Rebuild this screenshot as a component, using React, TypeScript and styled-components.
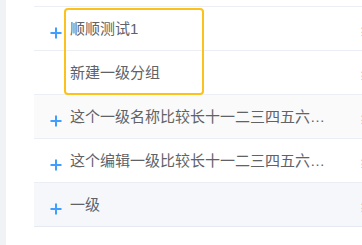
import React from "react";
import styled, { createGlobalStyle } from "styled-components";

const Global = createGlobalStyle`
  html, body { margin: 0; padding: 0; background: #fff; }
  body { width: 362px; height: 245px; overflow: hidden; }
`;

const Page = styled.div`
  display: flex;
  width: 362px;
  height: 245px;
  overflow: hidden;
  font-family: "Liberation Sans", "Noto Sans CJK SC", sans-serif;
`;

const SideStrip = styled.div`
  width: 6px;
  flex: none;
  background: #f0f2f5;
`;

const Main = styled.div`
  flex: none;
  padding: 6px 0 0 28px;
`;

const Table = styled.div`
  display: flex;
  flex-direction: column;
  width: 400px;
  border-top: 1px solid #ebeef5;
`;

const Group = styled.div`
  position: relative;
  &::after {
    content: "";
    position: absolute;
    left: 30px;
    top: 1px;
    width: 136px;
    height: 83px;
    border: 2px solid #fcc21b;
    border-radius: 4px;
    pointer-events: none;
  }
`;

const Row = styled.div<{ $bg?: string; $line?: string }>`
  display: flex;
  height: 43px;
  align-items: center;
  background: ${(p) => p.$bg || "#fff"};
  border-bottom: 1px solid ${(p) => p.$line || "#ebeef5"};
`;

const NameCell = styled.div`
  width: 315px;
  flex: none;
  box-sizing: border-box;
  padding: 0 12px 0 16px;
  display: flex;
  align-items: center;
  min-width: 0;
`;

const PlusSlot = styled.div`
  width: 20px;
  height: 20px;
  flex: none;
  display: flex;
  align-items: center;
  justify-content: flex-start;
  margin-top: 8px;
`;

const Label = styled.span`
  font-size: 15px;
  color: #606266;
  white-space: nowrap;
  overflow: hidden;
  text-overflow: ellipsis;
  min-width: 0;
  flex: 1;
  line-height: 20px;
`;

const OpCell = styled.div`
  flex: 1;
  min-width: 0;
  overflow: hidden;
  padding-left: 12px;
  font-size: 14px;
  color: #909399;
  white-space: nowrap;
`;

const Plus = () => (
  <svg width="12" height="12" viewBox="0 0 12 12">
    <path d="M6 0.5V11.5M0.5 6H11.5" stroke="#409eff" strokeWidth="2" />
  </svg>
);

const rows = [
  { name: "这个一级名称比较长十一二三四五六七八九十", bg: "#fafafa", plus: true },
  { name: "这个编辑一级比较长十一二三四五六七八九十", plus: true },
  { name: "一级", bg: "#f5f7fa", plus: true },
];

export default function App() {
  return (
    <>
      <Global />
      <Page>
        <SideStrip />
        <Main>
          <Table>
            <Group>
              <Row>
                <NameCell>
                  <PlusSlot>
                    <Plus />
                  </PlusSlot>
                  <Label>顺顺测试1</Label>
                </NameCell>
                <OpCell>编辑</OpCell>
              </Row>
              <Row>
                <NameCell>
                  <PlusSlot />
                  <Label>新建一级分组</Label>
                </NameCell>
                <OpCell>编辑</OpCell>
              </Row>
            </Group>
            {rows.map((r, i) => (
              <Row key={i} $bg={r.bg} $line={i === rows.length - 1 ? "#e4e9f2" : undefined}>
                <NameCell>
                  <PlusSlot>{r.plus && <Plus />}</PlusSlot>
                  <Label>{r.name}</Label>
                </NameCell>
                <OpCell>编辑</OpCell>
              </Row>
            ))}
          </Table>
        </Main>
      </Page>
    </>
  );
}
